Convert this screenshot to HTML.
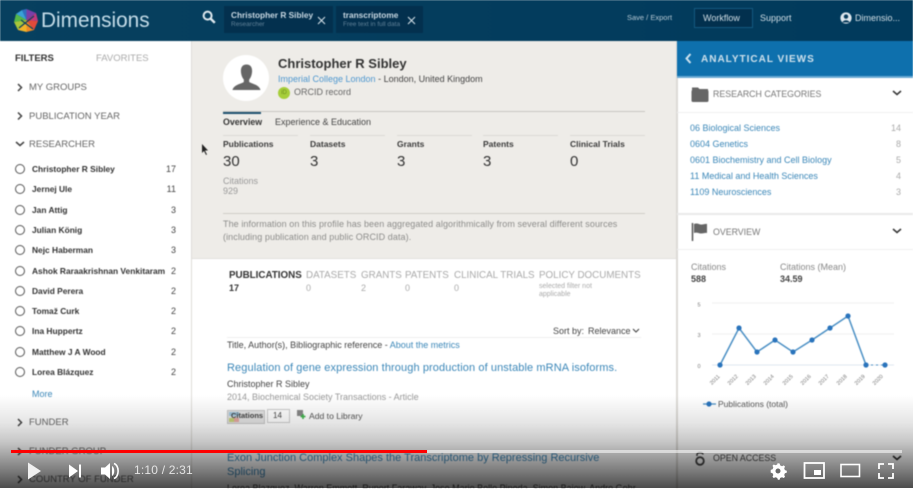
<!DOCTYPE html>
<html><head><meta charset="utf-8"><style>
html,body{margin:0;padding:0;background:#fff}
body{width:913px;height:491px;overflow:hidden;position:relative;font-family:"Liberation Sans",sans-serif}
#app{position:absolute;left:0;top:0;width:913px;height:488px;overflow:hidden;background:#fff;filter:blur(.45px)}
.t{position:absolute;white-space:nowrap;line-height:14px;height:14px}
.b{position:absolute}
.nm{font-size:8.4px;font-weight:bold;color:#333;left:32px}
.ct{font-size:9px;color:#444;right:737px;text-align:right}
.rd{position:absolute;left:15px;width:8px;height:8px;border:1.3px solid #555;border-radius:50%}
.fh{font-size:9.5px;color:#666;left:29px}
.lnk{color:#3b87b8}
.st{font-size:8.5px;font-weight:bold;color:#3a3a3a}
.sv{font-size:15px;color:#333}
.sl{position:absolute;top:135px;height:1px;background:#dcdad5;width:75px}
.tb{font-size:9.8px;color:#aaa}
.tv{font-size:9px;color:#aaa}
.cat{font-size:9px;color:#3b87b8;left:690px}
.cn{font-size:9px;color:#aaa;left:860px;width:41px;text-align:right}
.ax{font-size:5.5px;color:#666;fill:#777;text-anchor:middle}
svg{position:absolute;overflow:visible}
</style></head><body>
<div id="app">
<!-- header -->
<div class="b" style="left:0;top:0;width:913px;height:41px;background:linear-gradient(90deg,#07405f,#013a5c)"></div>
<svg style="left:13px;top:7px" width="27" height="27" viewBox="0 0 27 27">
<polygon points="13.5,2 9,3 13.5,13" fill="#2f6fc0"/>
<polygon points="9,3 3,7 13.5,13" fill="#3aa0d8"/>
<polygon points="3,7 1,15 13.5,13" fill="#55b848"/>
<polygon points="1,15 5,23 13.5,13" fill="#a6c63a"/>
<polygon points="5,23 13.5,25 13.5,13" fill="#f0b429"/>
<polygon points="13.5,25 21,23 13.5,13" fill="#f08a24"/>
<polygon points="21,23 25,14 13.5,13" fill="#e24a3a"/>
<polygon points="25,14 23,6 13.5,13" fill="#c2397d"/>
<polygon points="23,6 13.5,2 13.5,13" fill="#7a3fa8"/>
<path d="M6 21L21 9M8 13L20 22" stroke="#0a405f" stroke-width="1.2" fill="none"/>
</svg>
<div class="t" style="left:41px;top:9px;font-size:20.8px;line-height:24px;height:24px;color:#c5dde9">Dimensions</div>
<svg style="left:202px;top:10px" width="14" height="14" viewBox="0 0 14 14"><circle cx="5.6" cy="5.6" r="4" fill="none" stroke="#dfe9ef" stroke-width="2"/><path d="M8.6 8.6L12.8 12.8" stroke="#dfe9ef" stroke-width="2.4"/></svg>
<div class="b" style="left:224px;top:6px;width:109px;height:27px;background:#03304e"></div>
<div class="b" style="left:336px;top:6px;width:87px;height:27px;background:#03304e"></div>
<div class="t" style="left:231px;top:8px;font-size:8.3px;font-weight:bold;color:#c8d8e2">Christopher R Sibley</div>
<div class="t" style="left:231px;top:18px;font-size:6.5px;color:#5f8097">Researcher</div>
<div class="t" style="left:343px;top:8px;font-size:8.3px;font-weight:bold;color:#c8d8e2">transcriptome</div>
<div class="t" style="left:343px;top:18px;font-size:6.5px;color:#5f8097">Free text in full data</div>
<svg style="left:317px;top:16px" width="9" height="9"><path d="M1 1L8 8M8 1L1 8" stroke="#d0dde5" stroke-width="1.1"/></svg>
<svg style="left:407px;top:16px" width="9" height="9"><path d="M1 1L8 8M8 1L1 8" stroke="#d0dde5" stroke-width="1.1"/></svg>
<div class="t" style="left:627px;top:11px;font-size:7.5px;color:#b5c8d4">Save / Export</div>
<div class="b" style="left:694px;top:8px;width:57px;height:18px;background:#02304e;border:1px solid #14597f"></div>
<div class="t" style="left:703px;top:11px;font-size:9px;color:#d3dfe6">Workflow</div>
<div class="t" style="left:760px;top:11px;font-size:9px;color:#d3dfe6">Support</div>
<svg style="left:840px;top:12px" width="12" height="12" viewBox="0 0 12 12"><circle cx="6" cy="6" r="5.6" fill="#dfe8ee"/><circle cx="6" cy="4.6" r="2.2" fill="#0a3c5c"/><path d="M2.5 10.5C3 7.5 9 7.5 9.5 10.5Z" fill="#0a3c5c"/></svg>
<div class="t" style="left:855px;top:11px;font-size:9px;color:#d3dfe6">Dimensio...</div>

<!-- sidebar -->
<div class="b" style="left:191px;top:41px;width:1px;height:447px;background:#dedcd8"></div>
<div class="t" style="left:15px;top:52px;font-size:9.5px;font-weight:bold;color:#333">FILTERS</div>
<div class="t" style="left:96px;top:52px;font-size:9.5px;color:#aaa">FAVORITES</div>
<svg style="left:0;top:0" width="30" height="488" fill="none" stroke="#444" stroke-width="1.5">
<path d="M18 84l3.5 3.5L18 91M18 112.500l3.500 3.500L18 119.500M16 142l4 3.500 4-3.500M18 419l3.500 3.500L18 426M18 448l3.500 3.500L18 455M18 476l3.500 3.500L18 483"/></svg>
<div class="t fh" style="top:81px">MY GROUPS</div>
<div class="t fh" style="top:109.500px">PUBLICATION YEAR</div>
<div class="t fh" style="top:138px">RESEARCHER</div>
<div class="rd" style="top:164px"></div><div class="t nm" style="top:162px">Christopher R Sibley</div><div class="t ct" style="top:162px">17</div>
<div class="rd" style="top:184px"></div><div class="t nm" style="top:182px">Jernej Ule</div><div class="t ct" style="top:182px">11</div>
<div class="rd" style="top:205px"></div><div class="t nm" style="top:203px">Jan Attig</div><div class="t ct" style="top:203px">3</div>
<div class="rd" style="top:225px"></div><div class="t nm" style="top:223px">Julian König</div><div class="t ct" style="top:223px">3</div>
<div class="rd" style="top:245px"></div><div class="t nm" style="top:243px">Nejc Haberman</div><div class="t ct" style="top:243px">3</div>
<div class="rd" style="top:266px"></div><div class="t nm" style="top:264px;width:133px;overflow:hidden">Ashok Raraakrishnan Venkitaraman</div><div class="t ct" style="top:264px">2</div>
<div class="rd" style="top:286px"></div><div class="t nm" style="top:284px">David Perera</div><div class="t ct" style="top:284px">2</div>
<div class="rd" style="top:306px"></div><div class="t nm" style="top:304px">Tomaž Curk</div><div class="t ct" style="top:304px">2</div>
<div class="rd" style="top:326px"></div><div class="t nm" style="top:324px">Ina Huppertz</div><div class="t ct" style="top:324px">2</div>
<div class="rd" style="top:347px"></div><div class="t nm" style="top:345px">Matthew J A Wood</div><div class="t ct" style="top:345px">2</div>
<div class="rd" style="top:367px"></div><div class="t nm" style="top:365px">Lorea Blázquez</div><div class="t ct" style="top:365px">2</div>
<div class="t lnk" style="left:32px;top:387px;font-size:9px">More</div>
<div class="t fh" style="top:416px">FUNDER</div>
<div class="t fh" style="top:445px">FUNDER GROUP</div>
<div class="t fh" style="top:473px">COUNTRY OF FUNDER</div>

<!-- profile -->
<div class="b" style="left:192px;top:41px;width:484px;height:217px;background:#eeece8"></div>
<div class="b" style="left:192px;top:258px;width:484px;height:1px;background:#e2e0dc"></div>
<div class="b" style="left:223px;top:55px;width:46px;height:46px;border-radius:50%;background:#fff"></div>
<svg style="left:232px;top:64px" width="29" height="28" viewBox="0 0 29 28"><path d="M14.500 1C10 1 8.500 4.500 9 9c.3 3 1.500 5.500 2.800 7v2.500C9 20.500 2 21 .5 26.500h28C27 21 20 20.500 17.200 18.500V16c1.300-1.500 2.500-4 2.800-7 .5-4.500-1-8-5.500-8z" fill="#666" transform="translate(0 -.5)"/></svg>
<div class="t" style="left:278px;top:55px;font-size:13px;line-height:17px;height:17px;font-weight:bold;color:#333">Christopher R Sibley</div>
<div class="t" style="left:278px;top:72px;font-size:9px;color:#444"><span style="color:#4e97cf">Imperial College London</span> - London, United Kingdom</div>
<div class="b" style="left:278px;top:87px;width:12px;height:12px;border-radius:50%;background:#a6ce39;color:#6c8f1e;font-size:6px;line-height:12px;text-align:center">iD</div>
<div class="t" style="left:294px;top:85px;font-size:9px;color:#666">ORCID record</div>
<div class="b" style="left:223px;top:111px;width:422px;height:1px;background:#c9c7c2"></div>
<div class="b" style="left:223px;top:112px;width:38px;height:1.500px;background:#1f5270"></div>
<div class="t" style="left:223px;top:115px;font-size:8.8px;font-weight:bold;color:#333">Overview</div>
<div class="t" style="left:275px;top:115px;font-size:9px;color:#444">Experience &amp; Education</div>
<div class="sl" style="left:223px"></div><div class="sl" style="left:310px"></div><div class="sl" style="left:397px"></div><div class="sl" style="left:483px"></div><div class="sl" style="left:570px"></div>
<div class="t st" style="left:223px;top:137px">Publications</div>
<div class="t st" style="left:310px;top:137px">Datasets</div>
<div class="t st" style="left:397px;top:137px">Grants</div>
<div class="t st" style="left:483px;top:137px">Patents</div>
<div class="t st" style="left:570px;top:137px">Clinical Trials</div>
<div class="t sv" style="left:223px;top:155px">30</div>
<div class="t sv" style="left:310px;top:155px">3</div>
<div class="t sv" style="left:397px;top:155px">3</div>
<div class="t sv" style="left:483px;top:155px">3</div>
<div class="t sv" style="left:570px;top:155px">0</div>
<div class="t" style="left:223px;top:174px;font-size:9px;color:#999">Citations</div>
<div class="t" style="left:223px;top:184px;font-size:9px;color:#999">929</div>
<div class="b" style="left:223px;top:213px;width:422px;height:1px;background:#cfcdc8"></div>
<div class="t" style="left:223px;top:217px;font-size:9px;letter-spacing:.08px;color:#8c8c8a">The information on this profile has been aggregated algorithmically from several different sources</div>
<div class="t" style="left:223px;top:230px;font-size:9px;letter-spacing:.08px;color:#8c8c8a">(including publication and public ORCID data).</div>
<svg style="left:201px;top:144px" width="8" height="12" viewBox="0 0 8 12"><path d="M1 0v9l2-2 2 4 1-.5-2-4h3z" fill="#222"/></svg>

<!-- results -->
<div class="t" style="left:229px;top:269px;font-size:9.8px;font-weight:bold;color:#333">PUBLICATIONS</div>
<div class="t tb" style="left:306px;top:269px">DATASETS</div>
<div class="t tb" style="left:361px;top:269px">GRANTS</div>
<div class="t tb" style="left:405px;top:269px">PATENTS</div>
<div class="t tb" style="left:454px;top:269px">CLINICAL TRIALS</div>
<div class="t tb" style="left:539px;top:269px">POLICY DOCUMENTS</div>
<div class="t" style="left:229px;top:281px;font-size:9px;font-weight:bold;color:#333">17</div>
<div class="t tv" style="left:306px;top:281px">0</div>
<div class="t tv" style="left:361px;top:281px">2</div>
<div class="t tv" style="left:405px;top:281px">0</div>
<div class="t tv" style="left:454px;top:281px">0</div>
<div class="t" style="left:539px;top:283px;font-size:7px;line-height:8px;color:#aaa">selected filter not</div>
<div class="t" style="left:539px;top:291px;font-size:7px;line-height:8px;color:#aaa">applicable</div>
<div class="t" style="left:553px;top:324px;font-size:9px;color:#444">Sort by:</div>
<div class="t" style="left:588px;top:324px;font-size:9px;color:#444">Relevance</div>
<svg style="left:632px;top:328px" width="8" height="6"><path d="M1 1l3 3 3-3" fill="none" stroke="#444" stroke-width="1.100"/></svg>
<div class="b" style="left:227px;top:337px;width:414px;height:1px;background:#eee"></div>
<div class="t" style="left:227px;top:338px;font-size:9px;color:#444">Title, Author(s), Bibliographic reference - <span class="lnk">About the metrics</span></div>
<div class="t lnk" style="left:227px;top:360.500px;font-size:11px;letter-spacing:.1px">Regulation of gene expression through production of unstable mRNA isoforms.</div>
<div class="t" style="left:227px;top:376.500px;font-size:9px;color:#444">Christopher R Sibley</div>
<div class="t" style="left:227px;top:390px;font-size:9px;color:#999">2014, Biochemical Society Transactions - Article</div>
<div class="b" style="left:227px;top:410px;width:36px;height:12px;background:#e4e4e4;border:1px solid #c6c6c6;box-sizing:content-box"></div>
<svg style="left:228px;top:411px" width="12" height="12"><path d="M1 1h10v4H1z" fill="#9fc5dd"/><path d="M1 7h5v4H1z" fill="#c6cf76"/><path d="M6 7h5v4H6z" fill="#e4a7a0"/></svg>
<div class="t" style="left:231px;top:409px;font-size:7.500px;font-weight:bold;color:#444">Citations</div>
<div class="b" style="left:267px;top:409px;width:21px;height:12px;border:1px solid #ccc;background:#fff"></div>
<div class="t" style="left:273px;top:409px;font-size:8px;color:#444">14</div>
<svg style="left:297px;top:410px" width="10" height="10"><path d="M0 0h6v6H0z" fill="#888"/><path d="M6 4v5M3.500 6.500h5" stroke="#3db54a" stroke-width="1.600"/></svg>
<div class="t" style="left:309px;top:409px;font-size:8.6px;color:#555">Add to Library</div>
<div class="t lnk" style="left:227px;top:451px;font-size:11px">Exon Junction Complex Shapes the Transcriptome by Repressing Recursive</div>
<div class="t lnk" style="left:227px;top:465px;font-size:11px">Splicing</div>
<div class="t" style="left:227px;top:481px;font-size:9px;color:#444">Lorea Blazquez, Warren Emmett, Rupert Faraway, Jose Mario Bello Pineda, Simon Bajew, Andre Gohr</div>

<!-- right -->
<div class="b" style="left:676px;top:41px;width:1.500px;height:447px;background:#dddbd7"></div>
<div class="b" style="left:676.500px;top:41px;width:237px;height:35px;background:#0e70ad"></div>
<div class="b" style="left:676.500px;top:76px;width:237px;height:1.500px;background:#6aa9d3"></div>
<svg style="left:685px;top:53px" width="8" height="11"><path d="M5.500 1L1.500 5.500l4 4.500" fill="none" stroke="#cfe3ef" stroke-width="2"/></svg>
<div class="t" style="left:701px;top:52.500px;font-size:10px;font-weight:bold;letter-spacing:1px;color:#cfe1ec">ANALYTICAL VIEWS</div>
<svg style="left:691px;top:86px" width="18" height="16" viewBox="0 0 18 16"><path d="M1 1.500h6l1.500 1.500H17v2H1z" fill="#666"/><rect x="0.500" y="4" width="17" height="12" rx="1.500" fill="#666"/></svg>
<div class="t" style="left:713px;top:87px;font-size:8.8px;color:#777">RESEARCH CATEGORIES</div>
<svg style="left:892px;top:90px" width="10" height="7"><path d="M1 1l4 3.500L9 1" fill="none" stroke="#333" stroke-width="1.500"/></svg>
<div class="b" style="left:677px;top:112px;width:236px;height:1px;background:#efefef"></div>
<div class="t cat" style="top:121px">06 Biological Sciences</div><div class="t cn" style="top:121px">14</div>
<div class="t cat" style="top:137px">0604 Genetics</div><div class="t cn" style="top:137px">8</div>
<div class="t cat" style="top:153px">0601 Biochemistry and Cell Biology</div><div class="t cn" style="top:153px">5</div>
<div class="t cat" style="top:169px">11 Medical and Health Sciences</div><div class="t cn" style="top:169px">4</div>
<div class="t cat" style="top:185px">1109 Neurosciences</div><div class="t cn" style="top:185px">3</div>
<div class="b" style="left:677px;top:213px;width:236px;height:1.500px;background:#eaeaea"></div>
<svg style="left:691px;top:222px" width="18" height="20" viewBox="0 0 18 20"><path d="M1.500 1v18" stroke="#555" stroke-width="1.500"/><path d="M3 2c4-1.500 5 1 8 .5 2-.3 4-1 5-.5v9c-2-.5-3.500.5-6 .5s-4-1.500-7-.5z" fill="#666"/></svg>
<div class="t" style="left:713px;top:225px;font-size:8.8px;color:#777">OVERVIEW</div>
<svg style="left:892px;top:228px" width="10" height="7"><path d="M1 1l4 3.500L9 1" fill="none" stroke="#333" stroke-width="1.500"/></svg>
<div class="b" style="left:677px;top:249px;width:236px;height:1px;background:#efefef"></div>
<div class="t" style="left:691px;top:259.500px;font-size:9px;color:#888">Citations</div>
<div class="t" style="left:780px;top:259.500px;font-size:9px;color:#888">Citations (Mean)</div>
<div class="t" style="left:691px;top:272px;font-size:9px;font-weight:bold;color:#444">588</div>
<div class="t" style="left:780px;top:272px;font-size:9px;font-weight:bold;color:#444">34.59</div>
<svg style="left:0;top:0" width="913" height="488">
<path d="M712 303h182M712 334h182" stroke="#efefef" stroke-width="1"/><path d="M712 365h182" stroke="#dfe6f0" stroke-width="1"/>
<text x="699" y="306.500" class="ax">5</text><text x="699" y="337" class="ax">3</text><text x="699" y="368" class="ax">0</text>
<polyline points="720,365 739,328 757,352 775,340 793,352 812,340 830,328 848,316 866,365" fill="none" stroke="#4a8fc4" stroke-width="1.500"/>
<path d="M866 365H885" stroke="#4a8fc4" stroke-width="1" stroke-dasharray="2 3"/>
<g fill="#2a74bc"><circle cx="720" cy="365" r="2.600"/><circle cx="739" cy="328" r="2.600"/><circle cx="757" cy="352" r="2.600"/><circle cx="775" cy="340" r="2.600"/><circle cx="793" cy="352" r="2.600"/><circle cx="812" cy="340" r="2.600"/><circle cx="830" cy="328" r="2.600"/><circle cx="848" cy="316" r="2.600"/><circle cx="866" cy="365" r="2.600"/><circle cx="885" cy="365" r="2.600"/></g>
<g class="ax"><text transform="translate(716,381) rotate(-45)">2011</text><text transform="translate(734,381) rotate(-45)">2012</text><text transform="translate(752,381) rotate(-45)">2013</text><text transform="translate(770,381) rotate(-45)">2014</text><text transform="translate(789,381) rotate(-45)">2015</text><text transform="translate(807,381) rotate(-45)">2016</text><text transform="translate(825,381) rotate(-45)">2017</text><text transform="translate(843,381) rotate(-45)">2018</text><text transform="translate(861,381) rotate(-45)">2019</text><text transform="translate(879,381) rotate(-45)">2020</text></g>
<path d="M703 404h13" stroke="#4a8fc4" stroke-width="1.300"/><circle cx="709" cy="404" r="2.600" fill="#2a74bc"/>
</svg>
<div class="t" style="left:718px;top:397px;font-size:8.500px;color:#555">Publications (total)</div>
<svg style="left:694px;top:451px" width="12" height="15" viewBox="0 0 12 15"><circle cx="6" cy="10" r="3.800" fill="none" stroke="#444" stroke-width="1.800"/><path d="M3 5V3.500C3 1 9 1 9 3.500" fill="none" stroke="#444" stroke-width="1.500"/></svg>
<div class="t" style="left:713px;top:451px;font-size:8.8px;color:#444">OPEN ACCESS</div>
<svg style="left:892px;top:455px" width="10" height="7"><path d="M1 1l4 3.500L9 1" fill="none" stroke="#222" stroke-width="1.500"/></svg>
</div>

<!-- video player overlay -->
<div class="b" style="left:0;top:395px;width:913px;height:93px;background:linear-gradient(180deg,rgba(0,0,0,0) 0%,rgba(0,0,0,.1) 30%,rgba(0,0,0,.22) 50%,rgba(0,0,0,.36) 65%,rgba(0,0,0,.52) 82%,rgba(0,0,0,.7) 100%)"></div>
<div class="b" style="left:11px;top:450px;width:891px;height:3px;background:rgba(255,255,255,.55)"></div>
<div class="b" style="left:11px;top:450px;width:416px;height:3px;background:#f00"></div>
<svg style="left:0;top:455px" width="913" height="34" fill="#fff">
<path d="M28 7.500L41 16 28 24.500z" fill="#f0f0f0"/>
<path d="M69 9.500L78 16l-9 6.500zM79 9.500h2v13h-2z"/>
<path d="M101 12.500h4l5-4.500v16l-5-4.500h-4z"/><path d="M112 11c3 1.500 3 8.500 0 10z"/><path d="M114 8.500c5.500 2 5.500 13 0 15" fill="none" stroke="#fff" stroke-width="1.600"/>
<path d="M778 9.200l1.600.3.600 1.900 1.800.8 1.800-.8 1.200 1.200-.8 1.800.7 1.700 1.900.7v1.800l-1.900.7-.7 1.700.8 1.800-1.200 1.200-1.800-.8-1.800.7-.6 1.900h-1.700l-.7-1.900-1.700-.7-1.800.8-1.200-1.200.8-1.800-.7-1.700-1.900-.7V15.900l1.900-.7.7-1.700-.8-1.800 1.200-1.200 1.800.8 1.700-.8.7-1.900z" transform="translate(0 -1)"/>
<circle cx="778" cy="16" r="2.500" fill="#6a6a6a"/>
<rect x="804.500" y="8" width="19.500" height="15" fill="none" stroke="#fff" stroke-width="1.800"/><rect x="814" y="15" width="7" height="5"/>
<rect x="841" y="9.500" width="18.500" height="12" fill="none" stroke="#fff" stroke-width="1.600"/>
<path d="M879 14V9h5M888 9h5v5M893 18v5h-5M884 23h-5v-5" fill="none" stroke="#fff" stroke-width="1.800"/>
</svg>
<div class="t" style="left:134px;top:463px;font-size:12px;color:#e4e4e4;letter-spacing:.2px">1:10 / 2:31</div>
</body></html>
